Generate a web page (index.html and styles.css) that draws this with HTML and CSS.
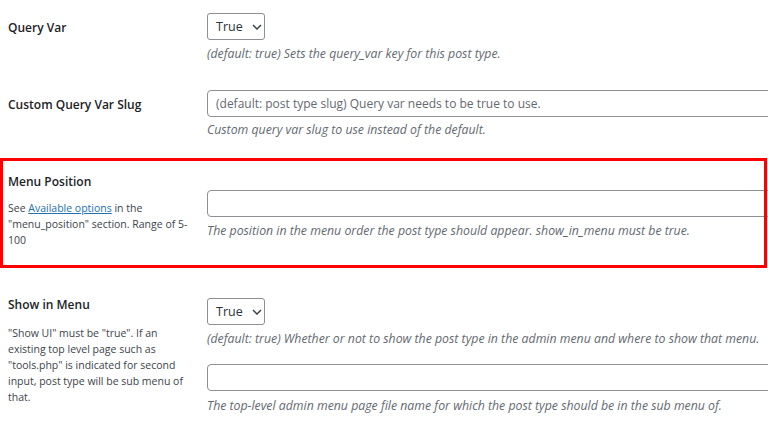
FILE: index.html
```html
<!DOCTYPE html>
<html>
<head>
<meta charset="utf-8">
<link rel="stylesheet" href="styles.css">
</head>
<body>
<div class="page">
  <div class="row row-qv">
    <div class="th"><span class="label">Query Var</span></div>
    <div class="td">
      <div class="select"><span>True</span><svg class="chev" width="10" height="6" viewBox="0 0 10 6"><path d="M1 1l4 4 4-4" fill="none" stroke="#3c434a" stroke-width="1.5"/></svg></div>
      <p class="desc d1">(default: true) Sets the query_var key for this post type.</p>
    </div>
  </div>
  <div class="row row-slug">
    <div class="th"><span class="label">Custom Query Var Slug</span></div>
    <div class="td">
      <div class="input"><span class="ph">(default: post type slug) Query var needs to be true to use.</span></div>
      <p class="desc d2">Custom query var slug to use instead of the default.</p>
    </div>
  </div>
  <div class="row row-menu highlight">
    <div class="th">
      <span class="label">Menu Position</span>
      <p class="help">See <a href="#">Available options</a> in the "menu_position" section. Range of 5-100</p>
    </div>
    <div class="td">
      <div class="input"></div>
      <p class="desc d3">The position in the menu order the post type should appear. show_in_menu must be true.</p>
    </div>
  </div>
  <div class="row row-show">
    <div class="th">
      <span class="label">Show in Menu</span>
      <p class="help">"Show UI" must be "true". If an existing top level page such as "tools.php" is indicated for second input, post type will be sub menu of that.</p>
    </div>
    <div class="td">
      <div class="select"><span>True</span><svg class="chev" width="10" height="6" viewBox="0 0 10 6"><path d="M1 1l4 4 4-4" fill="none" stroke="#3c434a" stroke-width="1.5"/></svg></div>
      <p class="desc d4">(default: true) Whether or not to show the post type in the admin menu and where to show that menu.</p>
      <div class="input input-second"></div>
      <p class="desc d5">The top-level admin menu page file name for which the post type should be in the sub menu of.</p>
    </div>
  </div>
</div>
</body>
</html>
```
FILE: styles.css
```css
html, body {
  margin: 0;
  padding: 0;
  background: #ffffff;
  overflow: hidden;
}
body {
  width: 768px;
  height: 426px;
  font-family: "Open Sans", "Noto Sans", sans-serif;
  color: #1d2327;
}
.page {
  display: flex;
  flex-direction: column;
}
.row {
  display: grid;
  grid-template-columns: 207px 600px;
}
.th {
  padding-left: 8px;
}
.label {
  display: block;
  font-size: 12px;
  font-weight: 600;
  line-height: 20px;
  color: #1d2327;
}
.help {
  margin: 0;
  font-size: 10.5px;
  line-height: 16px;
  color: #3c434a;
  width: 180px;
}
.help a {
  color: #2271b1;
  text-decoration: underline;
}
.desc {
  margin: 0;
  font-size: 12.3px;
  font-style: italic;
  line-height: 20px;
  color: #646970;
  white-space: nowrap;
}
.select {
  box-sizing: border-box;
  width: 58px;
  height: 27px;
  border: 1px solid #8c8f94;
  border-radius: 3px;
  display: flex;
  align-items: center;
  padding-left: 8px;
  gap: 9px;
  font-size: 12.5px;
  color: #2c3338;
}
.chev {
  display: block;
}
.input {
  box-sizing: border-box;
  width: 600px;
  height: 27px;
  border: 1px solid #8c8f94;
  border-radius: 4px;
  display: flex;
  align-items: center;
  padding-left: 8px;
}
.ph {
  font-size: 12px;
  color: #646970;
  white-space: nowrap;
}

/* row 1 */
.row-qv { padding-top: 13px; }
.row-qv .th { padding-top: 5px; }
.d1 { margin-top: 4px; }

/* row 2 */
.row-slug { padding-top: 26px; }
.row-slug .th { padding-top: 5px; }
.d2 { margin-top: 3px; }

/* row 3 (highlighted) */
.row-menu {
  margin-top: 18px;
  height: 110px;
  box-sizing: border-box;
  padding-top: 14px;
  position: relative;
}
.row-menu .help { margin-top: 8px; }
.row-menu .td { padding-top: 18px; }
.d3 { margin-top: 4px; }
.highlight::after {
  content: "";
  position: absolute;
  left: 0;
  top: 0;
  width: 767px;
  height: 110px;
  box-sizing: border-box;
  border: 3px solid #ff0000;
  pointer-events: none;
}

/* row 4 */
.row-show { padding-top: 27px; }
.row-show .help { margin-top: 10px; }
.row-show .td { padding-top: 3px; }
.d4 { margin-top: 4px; }
.input-second { margin-top: 15px; }
.d5 { margin-top: 5px; }
```
